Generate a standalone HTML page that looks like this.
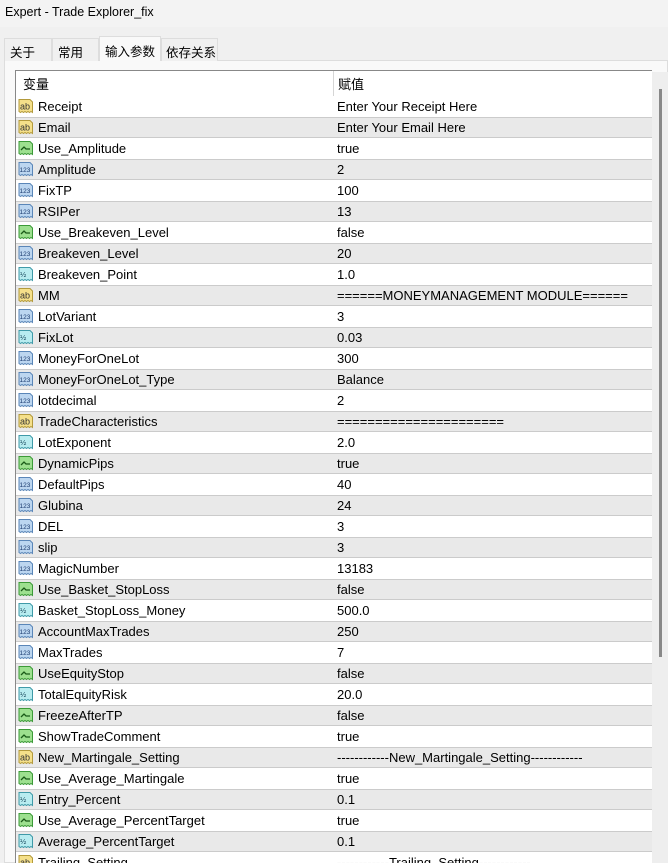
<!DOCTYPE html>
<html><head><meta charset="utf-8"><style>
*{margin:0;padding:0;box-sizing:border-box}
html,body{width:668px;height:863px;overflow:hidden}
body{background:#f0f0f0;font-family:"Liberation Sans","Noto Sans CJK SC",sans-serif;font-size:13px;color:#000;position:relative}
.title{position:absolute;left:0;top:0;width:668px;height:27px;background:#f3f3f3;padding:5px 0 0 5px;font-size:12.5px}
.tab{position:absolute;top:38px;height:23px;border:1px solid #ddd;border-bottom:none;background:#f0f0f0;padding:3px 0 0 5px;font-size:12.5px;white-space:nowrap;overflow:hidden}
.tab.sel{top:36px;height:25px;background:#f9f9f9;padding-top:4px}
.panel{position:absolute;left:4px;top:60px;width:664px;height:803px;background:#f9f9f9;border:1px solid #ddd}
.tbl{position:absolute;left:15px;top:70px;width:637px;height:793px;background:#fff;border-top:1px solid #888;border-left:1px solid #888;overflow:hidden}
.hdr{position:absolute;left:0;top:0;width:636px;height:25px}
.hdr span{position:absolute;top:3px}
.vl{position:absolute;left:317px;top:0;width:1px;height:25px;background:#d5d5d5}
.row{position:absolute;left:0;width:636px;height:21px}
.row.g{background:#e9e9e9;border-top:1px solid #cbcbcb;border-bottom:1px solid #cbcbcb}
.row .n{position:absolute;left:22px;top:3px}
.row .v{position:absolute;left:321px;top:3px}
.row.g .n,.row.g .v{top:2px}
.ic{position:absolute;left:2px;top:2px;width:16px;height:16px}
.row.g .ic{top:1px}
.sb{position:absolute;left:652px;top:72px;width:16px;height:791px;background:#eee}
.th{position:absolute;left:659px;top:89px;width:3px;height:568px;background:#888}
</style></head><body>
<div class="title">Expert - Trade Explorer_fix</div>
<div class="panel"></div>
<div class="tab" style="left:4px;width:48px">关于</div>
<div class="tab" style="left:52px;width:47px">常用</div>
<div class="tab sel" style="left:99px;width:62px">输入参数</div>
<div class="tab" style="left:161px;width:57px;padding-left:4px">依存关系</div>
<div class="tbl">
<div class="hdr"><span style="left:7px">变量</span><div class="vl"></div><span style="left:322px">赋值</span></div>
<div id="rows"></div>
</div>
<div class="sb"></div><div class="th"></div>
<svg width="0" height="0" style="position:absolute">
<defs>
<symbol id="ab" viewBox="0 0 16 16"><path d="M1 1.5h11l2.5 2.5v10.5l-1.5-1-1.5 1-1.5-1-1.5 1-1.5-1-1.5 1-1.5-1-1.5 1-1.5-1z" fill="#f5e08a" stroke="#b39a3c"/><text x="2" y="11.5" font-size="9" font-family="Liberation Sans" fill="#333">ab</text></symbol>
<symbol id="n" viewBox="0 0 16 16"><path d="M1 1.5h11l2.5 2.5v10.5l-1.5-1-1.5 1-1.5-1-1.5 1-1.5-1-1.5 1-1.5-1-1.5 1-1.5-1z" fill="#bcd6f0" stroke="#5a86b8"/><text x="1.5" y="11" font-size="6.5" font-family="Liberation Sans" fill="#1c3c70">123</text></symbol>
<symbol id="b" viewBox="0 0 16 16"><path d="M1 1.5h11l2.5 2.5v10.5l-1.5-1-1.5 1-1.5-1-1.5 1-1.5-1-1.5 1-1.5-1-1.5 1-1.5-1z" fill="#9de08f" stroke="#3c9a38"/><path d="M3 10l3-3 2 2h4" stroke="#1a5a18" fill="none" stroke-width="1.3"/></symbol>
<symbol id="d" viewBox="0 0 16 16"><path d="M1 1.5h11l2.5 2.5v10.5l-1.5-1-1.5 1-1.5-1-1.5 1-1.5-1-1.5 1-1.5-1-1.5 1-1.5-1z" fill="#b8ecf0" stroke="#3f9aa8"/><text x="2" y="11" font-size="7.5" font-family="Liberation Sans" fill="#1c4c60">½</text></symbol>
</defs></svg>
<script>
var R=[["ab","Receipt","Enter Your Receipt Here"],["ab","Email","Enter Your Email Here"],["b","Use_Amplitude","true"],["n","Amplitude","2"],["n","FixTP","100"],["n","RSIPer","13"],["b","Use_Breakeven_Level","false"],["n","Breakeven_Level","20"],["d","Breakeven_Point","1.0"],["ab","MM","======MONEYMANAGEMENT MODULE======"],["n","LotVariant","3"],["d","FixLot","0.03"],["n","MoneyForOneLot","300"],["n","MoneyForOneLot_Type","Balance"],["n","lotdecimal","2"],["ab","TradeCharacteristics","======================"],["d","LotExponent","2.0"],["b","DynamicPips","true"],["n","DefaultPips","40"],["n","Glubina","24"],["n","DEL","3"],["n","slip","3"],["n","MagicNumber","13183"],["b","Use_Basket_StopLoss","false"],["d","Basket_StopLoss_Money","500.0"],["n","AccountMaxTrades","250"],["n","MaxTrades","7"],["b","UseEquityStop","false"],["d","TotalEquityRisk","20.0"],["b","FreezeAfterTP","false"],["b","ShowTradeComment","true"],["ab","New_Martingale_Setting","------------New_Martingale_Setting------------"],["b","Use_Average_Martingale","true"],["d","Entry_Percent","0.1"],["b","Use_Average_PercentTarget","true"],["d","Average_PercentTarget","0.1"],["ab","Trailing_Setting","------------Trailing_Setting------------"]];
var h="";R.forEach(function(r,i){h+='<div class="row'+(i%2?' g':'')+'" style="top:'+(25+21*i)+'px"><svg class="ic"><use href="#'+r[0]+'"/></svg><span class="n">'+r[1]+'</span><span class="v">'+r[2]+'</span></div>';});
document.getElementById("rows").innerHTML=h;
</script>
</body></html>
